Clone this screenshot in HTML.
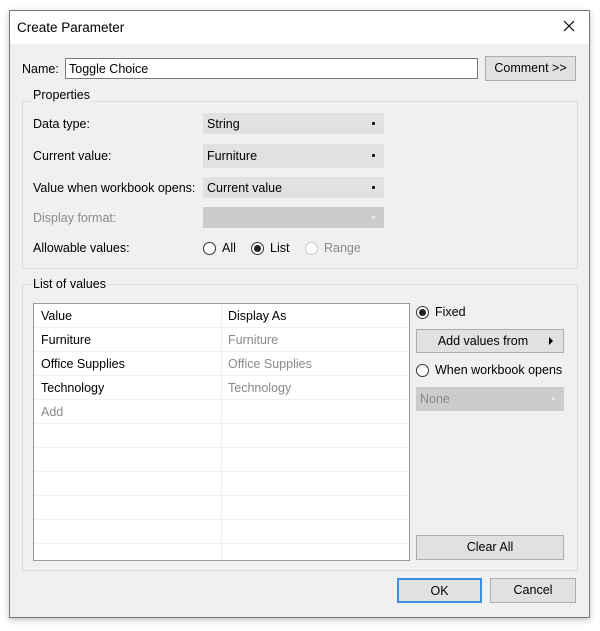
<!DOCTYPE html>
<html><head><style>
*{box-sizing:border-box;margin:0;padding:0}
body{width:600px;height:631px;background:#fff;font-family:"Liberation Sans",sans-serif;font-size:12.5px;color:#000;position:relative;overflow:hidden}
.a{position:absolute}
.dlg{left:9px;top:10px;width:581px;height:608px;background:#f0f0f0;border:1px solid #777;box-shadow:0 2px 6px rgba(0,0,0,.25)}
.title{left:0;top:0;width:579px;height:33px;background:#fff}
.btn{background:#e1e1e1;border:1px solid #adadad;text-align:center}
.cb{background:#e1e1e1;border:1px solid #e1e1e1;padding-left:3px}
.cb::after{content:"";position:absolute;right:8px;top:50%;width:3px;height:3px;background:#000;border-radius:1px;margin-top:-2px}
.dis{background:#ccc;border-color:#ccc}
.dis::after{background:#e8e8e8}
.grp{border:1px solid #dcdcdc}
.leg{background:#f0f0f0;padding:0 2px}
.rad{width:13px;height:13px;border:1px solid #333;border-radius:50%;background:#fff}
.rad.on::after{content:"";position:absolute;left:2px;top:2px;width:7px;height:7px;border-radius:50%;background:#222}
.gr{color:#8a8a8a}
.row{left:0;width:375px;height:24px;border-bottom:1px solid #f0f0f0}
</style></head><body>
<div class="a dlg">
<div class="a title"></div>
<div class="a" style="left:7px;top:9px;font-size:13.5px">Create Parameter</div>
<svg class="a" style="left:553px;top:9px" width="12" height="12"><path d="M1 1L11 11M11 1L1 11" stroke="#000" stroke-width="1.2"/></svg>
</div>
<div class="a" style="left:22px;top:62px">Name:</div>
<div class="a" style="left:65px;top:58px;width:413px;height:21px;background:#fff;border:1px solid #7a7a7a;padding:3px 3px">Toggle Choice</div>
<div class="a btn" style="left:485px;top:56px;width:91px;height:25px;line-height:23px">Comment &gt;&gt;</div>

<div class="a grp" style="left:22px;top:101px;width:556px;height:168px"></div>
<div class="a leg" style="left:31px;top:88px">Properties</div>
<div class="a" style="left:33px;top:117px">Data type:</div>
<div class="a" style="left:33px;top:149px">Current value:</div>
<div class="a" style="left:33px;top:181px">Value when workbook opens:</div>
<div class="a gr" style="left:33px;top:211px">Display format:</div>
<div class="a" style="left:33px;top:241px">Allowable values:</div>
<div class="a cb" style="left:203px;top:113px;width:181px;height:21px;line-height:20px">String</div>
<div class="a cb" style="left:203px;top:144px;width:181px;height:24px;line-height:23px">Furniture</div>
<div class="a cb" style="left:203px;top:177px;width:181px;height:21px;line-height:20px">Current value</div>
<div class="a cb dis" style="left:203px;top:207px;width:181px;height:21px"></div>
<div class="a rad" style="left:203px;top:242px"></div><div class="a" style="left:222px;top:241px">All</div>
<div class="a rad on" style="left:251px;top:242px"></div><div class="a" style="left:270px;top:241px">List</div>
<div class="a rad" style="left:305px;top:242px;border-color:#c8c8c8"></div><div class="a gr" style="left:324px;top:241px">Range</div>

<div class="a grp" style="left:22px;top:284px;width:556px;height:287px"></div>
<div class="a leg" style="left:31px;top:277px">List of values</div>
<div class="a" style="left:33px;top:303px;width:377px;height:258px;background:#fff;border:1px solid #9a9a9a;overflow:hidden">
<div class="a" style="left:187px;top:0;width:1px;height:258px;background:#f0f0f0"></div>
<div class="a row" style="top:0"></div>
<div class="a row" style="top:24px"></div>
<div class="a row" style="top:48px"></div>
<div class="a row" style="top:72px"></div>
<div class="a row" style="top:96px"></div>
<div class="a row" style="top:120px"></div>
<div class="a row" style="top:144px"></div>
<div class="a row" style="top:168px"></div>
<div class="a row" style="top:192px"></div>
<div class="a row" style="top:216px"></div>
<div class="a" style="left:7px;top:5px">Value</div><div class="a" style="left:194px;top:5px">Display As</div>
<div class="a" style="left:7px;top:29px">Furniture</div><div class="a gr" style="left:194px;top:29px">Furniture</div>
<div class="a" style="left:7px;top:53px">Office Supplies</div><div class="a gr" style="left:194px;top:53px">Office Supplies</div>
<div class="a" style="left:7px;top:77px">Technology</div><div class="a gr" style="left:194px;top:77px">Technology</div>
<div class="a gr" style="left:7px;top:101px">Add</div>
</div>
<div class="a rad on" style="left:416px;top:306px"></div><div class="a" style="left:435px;top:305px">Fixed</div>
<div class="a btn" style="left:416px;top:329px;width:148px;height:24px;line-height:22px;padding-right:14px">Add values from</div>
<svg class="a" style="left:549px;top:337px" width="5" height="8"><path d="M0 0L4 4L0 8Z" fill="#000"/></svg>
<div class="a rad" style="left:416px;top:364px"></div><div class="a" style="left:435px;top:363px">When workbook opens</div>
<div class="a cb dis gr" style="left:416px;top:387px;width:148px;height:24px;line-height:23px">None</div>
<div class="a btn" style="left:416px;top:535px;width:148px;height:25px;line-height:23px">Clear All</div>
<div class="a btn" style="left:397px;top:578px;width:85px;height:25px;line-height:23px;border:2px solid #3c8ee0">OK</div>
<div class="a btn" style="left:490px;top:578px;width:86px;height:25px;line-height:23px">Cancel</div>
</body></html>
